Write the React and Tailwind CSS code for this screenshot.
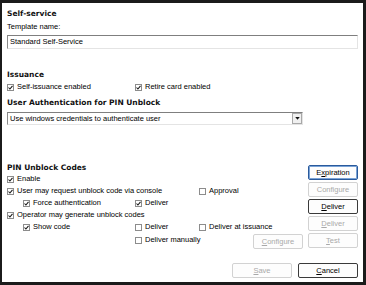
import React from 'react';

const title = "font-['DejaVu_Sans',Verdana,sans-serif] font-bold text-[7.5px] h-[10px] leading-[10px] text-[#111]";

function Check({ checked, label, className = '' }) {
  return (
    <div className={`flex items-center gap-[3px] h-[12px] whitespace-nowrap ${className}`}>
      <span className="w-[7px] h-[7px] shrink-0 border border-[#8c8c8c] bg-white flex items-center justify-center">
        {checked && (
          <svg viewBox="0 0 6 6" className="w-[5px] h-[5px]">
            <path d="M0.6 3 L2.3 4.8 L5.4 1" stroke="#1a1a1a" strokeWidth="1.3" fill="none" />
          </svg>
        )}
      </span>
      <span>{label}</span>
    </div>
  );
}

function Btn({ children, disabled, focused, className = '' }) {
  let look = 'border-[#3a3a3a] text-black';
  if (disabled) look = 'border-[#d2d2d2] text-[#a9a9a9]';
  if (focused) look = 'border-[#2a5a9c] text-black shadow-[inset_0_0_0_1px_#7aa3d6]';
  return (
    <div className={`h-[15px] flex items-center justify-center rounded-[2px] border bg-[#fdfdfd] ${look} ${className}`}>
      {children}
    </div>
  );
}

export default function App() {
  return (
    <div className="w-[366px] h-[285px] bg-white border-t-[3px] border-l-[2px] border-r-[3px] border-b-[3px] border-[#1b1b1b] pl-[5px] pr-[5px] pb-[4px] flex flex-col font-['Liberation_Sans',Arial,sans-serif] text-[7.5px] leading-none text-black">
      <div className={`${title} mt-[6px]`}>Self-service</div>
      <div className="h-[10px] leading-[10px] mt-[3px]">Template name:</div>
      <div className="mt-[3px] h-[14px] border border-t-[#7f7f7f] border-l-[#8a8a8a] border-r-[#e4e4e4] border-b-[#e4e4e4] flex items-center pl-[2px]">
        Standard Self-Service
      </div>

      <div className={`${title} mt-[21px]`}>Issuance</div>
      <div className="flex mt-[1px]">
        <Check checked label="Self-issuance enabled" className="w-[128px]" />
        <Check checked label="Retire card enabled" />
      </div>

      <div className={`${title} mt-[5px]`}>User Authentication for PIN Unblock</div>
      <div className="mt-[4px] w-[296px] h-[13px] border border-t-[#7f7f7f] border-l-[#8a8a8a] border-r-[#e4e4e4] border-b-[#e4e4e4] flex items-center pl-[2px]">
        <span className="flex-1">Use windows credentials to authenticate user</span>
        <span className="w-[10px] h-[11px] border border-[#a8a8a8] bg-[#f0f0f0] flex items-center justify-center">
          <svg viewBox="0 0 6 4" className="w-[5px] h-[3px]">
            <path d="M0 0 H6 L3 3.5 Z" fill="#111" />
          </svg>
        </span>
      </div>

      <div className="flex gap-[5px] mt-[38px]">
        <div className="flex-1 flex flex-col">
          <div className={title}>PIN Unblock Codes</div>
          <Check checked label="Enable" />
          <div className="flex">
            <Check checked label="User may request unblock code via console" className="w-[192px]" />
            <Check label="Approval" />
          </div>
          <div className="flex pl-[16px]">
            <Check checked label="Force authentication" className="w-[112px]" />
            <Check checked label="Deliver" />
          </div>
          <Check checked label="Operator may generate unblock codes" />
          <div className="flex pl-[16px]">
            <Check checked label="Show code" className="w-[112px]" />
            <Check label="Deliver" className="w-[64px]" />
            <Check label="Deliver at issuance" />
          </div>
          <div className="flex items-start pl-[128px] mt-[1px]">
            <Check label="Deliver manually" />
            <Btn disabled className="ml-auto w-[50px]">
              <span><span className="underline">C</span>onfigure</span>
            </Btn>
          </div>
        </div>
        <div className="w-[50px] flex flex-col gap-[2px] mt-[2px]">
          <Btn focused>
            <span>E<span className="underline">x</span>piration</span>
          </Btn>
          <Btn disabled>Configure</Btn>
          <Btn>
            <span><span className="underline">D</span>eliver</span>
          </Btn>
          <Btn disabled>
            <span><span className="underline">D</span>eliver</span>
          </Btn>
          <Btn disabled>
            <span><span className="underline">T</span>est</span>
          </Btn>
        </div>
      </div>

      <div className="mt-auto flex justify-end gap-[6px]">
        <Btn disabled className="w-[60px]">
          <span><span className="underline">S</span>ave</span>
        </Btn>
        <Btn className="w-[60px]">
          <span><span className="underline">C</span>ancel</span>
        </Btn>
      </div>
    </div>
  );
}
